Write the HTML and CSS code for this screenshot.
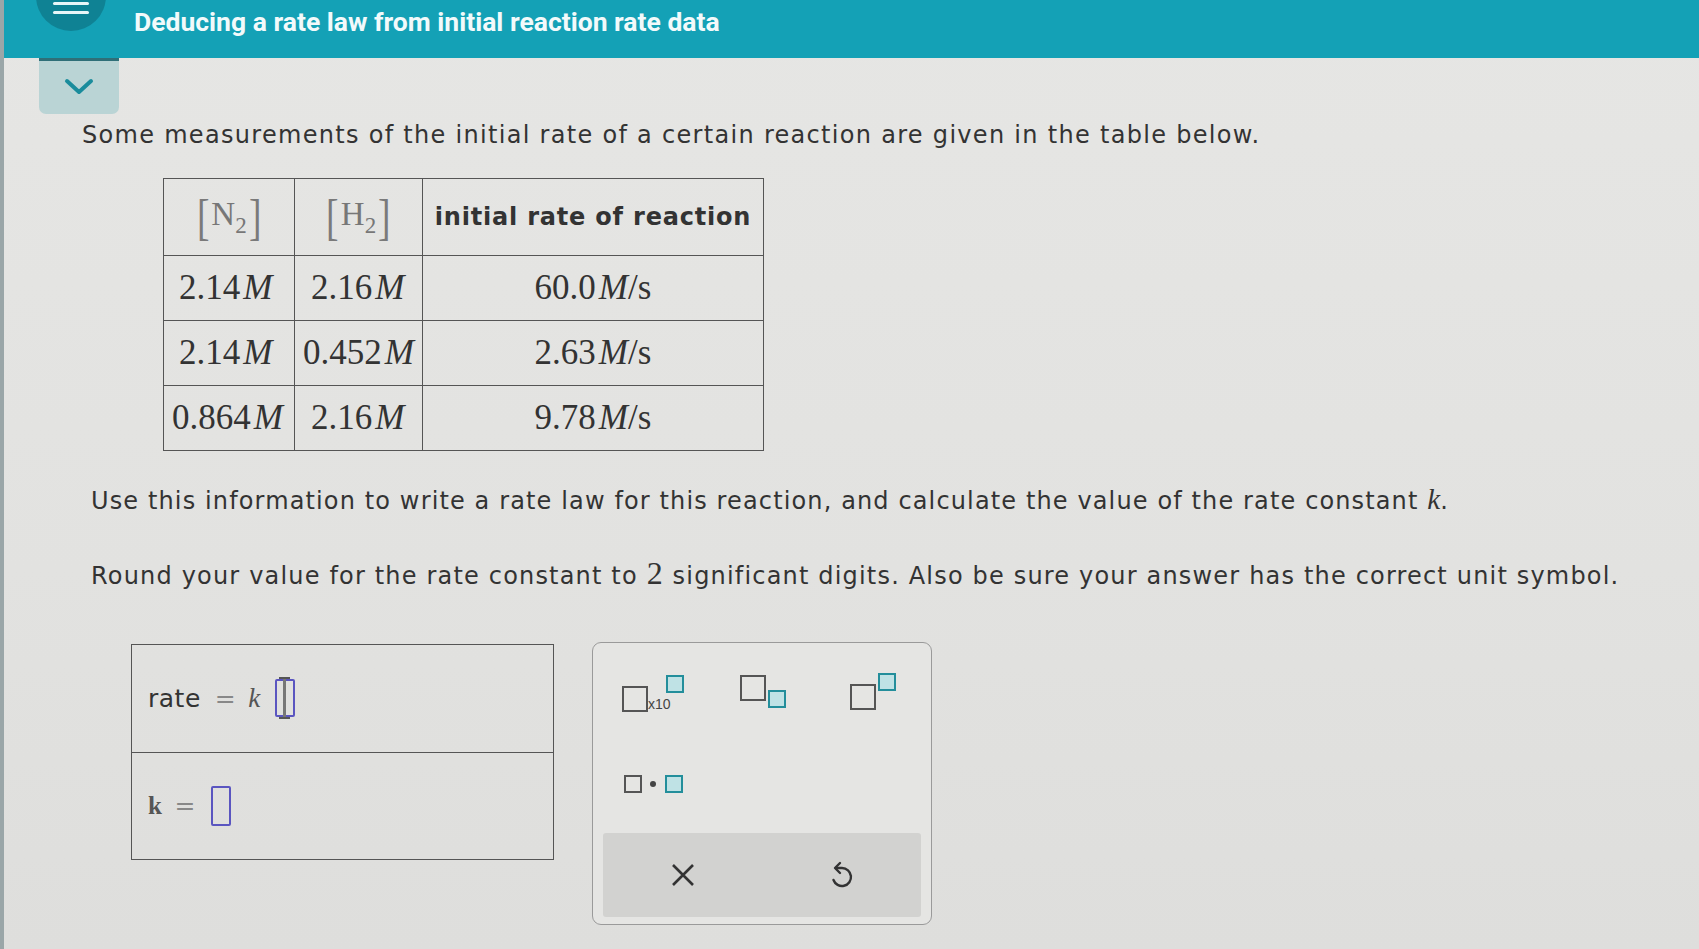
FILE: index.html
```html
<!DOCTYPE html>
<html lang="en">
<head>
<meta charset="utf-8">
<title>Deducing a rate law from initial reaction rate data</title>
<link rel="stylesheet" href="styles.css">
</head>
<body>
<div class="page">
  <header class="topbar">
    <div class="menu"><span class="bar"></span><span class="bar"></span></div>
    <h1 class="title">Deducing a rate law from initial reaction rate data</h1>
  </header>
  <div class="tab">
    <svg width="30" height="18" viewBox="0 0 30 18"><path d="M3 3 L15 14 L27 3" fill="none" stroke="#1a8c9c" stroke-width="4" stroke-linecap="round" stroke-linejoin="round"/></svg>
  </div>
  <main class="content">
    <p class="p1">Some measurements of the initial rate of a certain reaction are given in the table below.</p>
    <table class="data">
      <tr class="hrow">
        <th class="c1"><span class="br">[</span><span class="sym">N<sub>2</sub></span><span class="br">]</span></th>
        <th class="c2"><span class="br">[</span><span class="sym">H<sub>2</sub></span><span class="br">]</span></th>
        <th class="c3 head">initial rate of reaction</th>
      </tr>
      <tr><td>2.14<i>M</i></td><td>2.16<i>M</i></td><td class="mid">60.0<i>M</i>/s</td></tr>
      <tr><td>2.14<i>M</i></td><td>0.452<i>M</i></td><td class="mid">2.63<i>M</i>/s</td></tr>
      <tr><td>0.864<i>M</i></td><td>2.16<i>M</i></td><td class="mid">9.78<i>M</i>/s</td></tr>
    </table>
    <p class="p2">Use this information to write a rate law for this reaction, and calculate the value of the rate constant <i class="mk">k</i>.</p>
    <p class="p3">Round your value for the rate constant to <span class="num">2</span> significant digits. Also be sure your answer has the correct unit symbol.</p>
    <div class="answer">
      <div class="ansbox">
        <div class="arow">
          <span class="word">rate</span><span class="eq">=</span><i class="mk2">k</i>
          <span class="slot cursor"><span class="ibeam"></span></span>
        </div>
        <div class="arow second">
          <span class="kk">k</span><span class="eq">=</span>
          <span class="slot"></span>
        </div>
      </div>
      <div class="palette">
        <div class="tools">
          <div class="tool t1">
            <svg width="66" height="40" viewBox="0 0 66 40">
              <rect x="2" y="14" width="24" height="24" fill="none" stroke="#555" stroke-width="2"/>
              <text x="27" y="36" font-family="Liberation Sans, Arial, sans-serif" font-size="14" fill="#444">x10</text>
              <rect x="46" y="3" width="16" height="16" fill="#bfe2e5" stroke="#238e9b" stroke-width="2"/>
            </svg>
          </div>
          <div class="tool t2">
            <svg width="50" height="40" viewBox="0 0 50 40">
              <rect x="2" y="3" width="24" height="24" fill="none" stroke="#555" stroke-width="2"/>
              <rect x="30" y="18" width="16" height="16" fill="#bfe2e5" stroke="#238e9b" stroke-width="2"/>
            </svg>
          </div>
          <div class="tool t3">
            <svg width="50" height="40" viewBox="0 0 50 40">
              <rect x="2" y="12" width="24" height="24" fill="none" stroke="#555" stroke-width="2"/>
              <rect x="30" y="1" width="16" height="16" fill="#bfe2e5" stroke="#238e9b" stroke-width="2"/>
            </svg>
          </div>
        </div>
        <div class="tools row2">
          <div class="tool t4">
            <svg width="66" height="22" viewBox="0 0 66 22">
              <rect x="3" y="3" width="16" height="16" fill="none" stroke="#555" stroke-width="2"/>
              <circle cx="31" cy="11" r="3" fill="#444"/>
              <rect x="44" y="3" width="16" height="16" fill="#bfe2e5" stroke="#238e9b" stroke-width="2"/>
            </svg>
          </div>
        </div>
        <div class="actions">
          <div class="act">
            <svg width="26" height="26" viewBox="0 0 26 26"><path d="M3 3 L23 23 M23 3 L3 23" stroke="#333" stroke-width="2.6" fill="none"/></svg>
          </div>
          <div class="act">
            <svg width="26" height="30" viewBox="0 0 26 30"><path d="M7 8 H13 A9 9 0 1 1 4.5 20" stroke="#333" stroke-width="2.4" fill="none" stroke-linecap="round"/><path d="M11 3 L6 8 L11 13" stroke="#333" stroke-width="2.4" fill="none" stroke-linecap="round" stroke-linejoin="round"/></svg>
          </div>
        </div>
      </div>
    </div>
  </main>
</div>
</body>
</html>
```

FILE: styles.css
```css
html, body {
  margin: 0;
  padding: 0;
}
body {
  width: 1699px;
  height: 949px;
  overflow: hidden;
  background: #e3e3e1;
  font-family: "DejaVu Sans", Verdana, sans-serif;
  color: #333;
}
.page {
  border-left: 4px solid #9aa6a8;
  min-height: 949px;
  box-sizing: border-box;
  background: linear-gradient(180deg, #e6e6e4 0%, #e2e2e0 60%, #dededc 100%);
}
.topbar {
  height: 58px;
  background: #14a1b6;
  display: flex;
  align-items: flex-start;
  overflow: hidden;
}
.menu {
  width: 70px;
  height: 70px;
  flex: none;
  border-radius: 50%;
  background: #0f8294;
  margin: -39px 0 0 32px;
  display: flex;
  flex-direction: column;
  align-items: center;
  padding-top: 41px;
  box-sizing: border-box;
  gap: 6px;
}
.bar {
  display: block;
  width: 36px;
  height: 3px;
  background: #e8f6f8;
  border-radius: 2px;
}
.title {
  margin: 7px 0 0 28px;
  font-family: Roboto, "Liberation Sans", sans-serif;
  font-weight: 700;
  font-size: 26.5px;
  letter-spacing: 0;
  line-height: 30px;
  color: #f2fafb;
}
.tab {
  width: 80px;
  height: 53px;
  margin-left: 35px;
  background: #bad4d5;
  border-top: 3px solid #2f6f78;
  border-radius: 0 0 7px 7px;
  display: flex;
  align-items: center;
  justify-content: center;
}
.tab svg { margin-top: -2px; }
.content {
  padding-left: 78px;
}
.p1 {
  margin: 7px 0 0 0;
  font-size: 24px;
  letter-spacing: 1.3px;
  line-height: 28px;
  color: #333;
}
.data {
  margin: 29px 0 0 81px;
  border-collapse: collapse;
  font-family: "Liberation Serif", "Times New Roman", serif;
  color: #333;
}
.data td, .data th {
  border: 1.5px solid #555;
  padding: 0;
  height: 64px;
  font-size: 35px;
  font-weight: 400;
  text-align: center;
}
.data .hrow th { height: 76px; }
.data .c1 { width: 130px; }
.data .c2 { width: 127px; }
.data .c3 { width: 340px; }
.data td:first-child, .data td:nth-child(2) { text-align: left; padding-left: 15px; }
.data td:nth-child(2) { padding-left: 16px; }
.data tr:nth-child(3) td:nth-child(2) { padding-left: 8px; }
.data tr:nth-child(4) td:first-child { padding-left: 8px; }
.data i { margin-left: 3px; }
.data .mid { padding-left: 0; }
.data .head {
  font-family: "DejaVu Sans", Verdana, sans-serif;
  font-weight: 700;
  font-size: 24px;
  letter-spacing: 0.8px;
  color: #333;
}
.br {
  font-size: 50px;
  color: #7a7a7a;
  font-weight: 300;
  display: inline-block;
  transform: scaleX(0.75);
  vertical-align: middle;
  line-height: 1;
}
.sym {
  font-size: 33px;
  color: #777;
  vertical-align: middle;
}
.sym sub { font-size: 23px; vertical-align: -8px; }
.p2 {
  margin: 34px 0 0 9px;
  font-size: 24px;
  letter-spacing: 1.13px;
  line-height: 28px;
}
.p3 {
  margin: 44px 0 0 9px;
  font-size: 24px;
  line-height: 28px;
  letter-spacing: 1.18px;
}
.mk {
  font-family: "Liberation Serif", "Times New Roman", serif;
  font-size: 29px;
  letter-spacing: 0;
}
.num {
  font-family: "Liberation Serif", "Times New Roman", serif;
  font-size: 32px;
}
.answer {
  display: flex;
  align-items: flex-start;
  gap: 38px;
  margin: 54px 0 0 49px;
}
.ansbox {
  width: 423px;
  height: 216px;
  box-sizing: border-box;
  border: 1.5px solid #555;
  display: flex;
  flex-direction: column;
}
.arow {
  flex: 1;
  display: flex;
  align-items: center;
  padding-left: 16px;
  font-size: 25px;
  letter-spacing: 0.5px;
  color: #333;
}
.arow.second {
  border-top: 1.5px solid #555;
}
.word { color: #333; }
.eq {
  color: #888;
  margin: 0 12px 0 14px;
  font-family: "DejaVu Sans", sans-serif;
}
.mk2 {
  font-family: "Liberation Serif", serif;
  font-size: 27px;
  color: #555;
  margin-right: 14px;
}
.kk {
  font-family: "Liberation Serif", serif;
  font-size: 25px;
  color: #555;
  font-weight: 700;
}
.arow.second .eq { margin: 0 15px 0 12px; }
.slot {
  display: inline-block;
  width: 16px;
  height: 36px;
  border: 2px solid #5a55c0;
  border-radius: 2px;
  position: relative;
}
.cursor { height: 34px; }
.ibeam {
  position: absolute;
  left: 6px;
  top: -4px;
  width: 3px;
  height: 42px;
  background: #777;
}
.ibeam::before, .ibeam::after {
  content: "";
  position: absolute;
  left: -4px;
  width: 11px;
  height: 2px;
  background: #555;
}
.ibeam::before { top: 0; }
.ibeam::after { bottom: 0; }
.palette {
  width: 340px;
  height: 283px;
  box-sizing: border-box;
  border: 1.5px solid #9a9a9a;
  border-radius: 9px;
  background: #e5e5e3;
  padding: 30px 10px 7px 10px;
  display: flex;
  flex-direction: column;
  margin-top: -2px;
}
.tools {
  display: flex;
  align-items: flex-start;
  padding-left: 18px;
}
.tool svg { display: block; }
.t1 { width: 118px; }
.t2 { width: 110px; }
.row2 { margin-top: 60px; padding-left: 19px; }
.actions {
  margin-top: auto;
  height: 84px;
  background: #d2d2d0;
  border-radius: 3px;
  display: flex;
}
.act {
  flex: 1;
  display: flex;
  align-items: center;
  justify-content: center;
}
```
